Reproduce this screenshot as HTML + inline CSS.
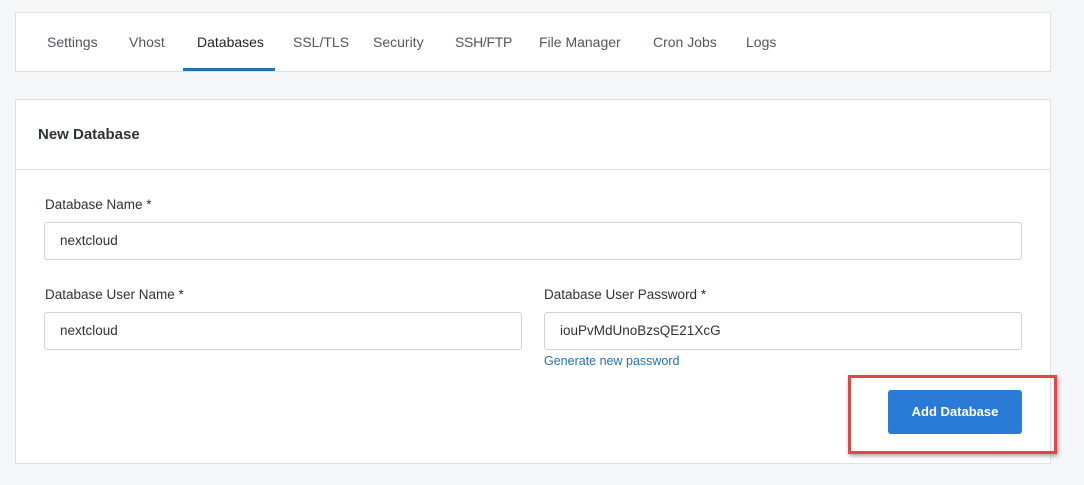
<!DOCTYPE html><html><head><style>
body{margin:0;background:#f5f6f8;font-family:"Liberation Sans",sans-serif;width:1084px;height:485px;position:relative;overflow:hidden;color:#2c3338}
.a{position:absolute}
.tabs{left:15px;top:12px;width:1034px;height:58px;background:#fff;border:1px solid #dcdfe3}
.tab{position:absolute;top:21px;font-size:14px;color:#50575e}
.card{left:15px;top:99px;width:1034px;height:363px;background:#fff;border:1px solid #dcdfe3}
.lbl{font-size:13.5px;color:#2c3338}
.inp{border:1px solid #cfd3d8;border-radius:3px;background:#fff;height:36px;box-sizing:border-box;font-size:13.5px;padding:10px 15px;color:#2c3338}
</style></head><body>
<div class="a tabs">
<span class="tab" style="left:31px">Settings</span>
<span class="tab" style="left:113px">Vhost</span>
<span class="tab" style="left:181px;color:#1d2327">Databases</span>
<span class="tab" style="left:277px">SSL/TLS</span>
<span class="tab" style="left:357px">Security</span>
<span class="tab" style="left:439px;letter-spacing:-0.3px">SSH/FTP</span>
<span class="tab" style="left:523px">File Manager</span>
<span class="tab" style="left:637px">Cron Jobs</span>
<span class="tab" style="left:730px">Logs</span>
<div class="a" style="left:167px;top:55px;width:92px;height:3px;background:#2271b1"></div>
</div>
<div class="a card">
<div class="a" style="left:22px;top:26px;font-size:15px;font-weight:bold;color:#2c3338">New Database</div>
<div class="a" style="left:0;top:69px;width:1034px;height:1px;background:#dcdfe3"></div>
</div>
<div class="a lbl" style="left:45px;top:197px">Database Name *</div>
<div class="a inp" style="left:44px;top:222px;width:978px;height:38px">nextcloud</div>
<div class="a lbl" style="left:45px;top:287px">Database User Name *</div>
<div class="a inp" style="left:44px;top:312px;width:478px;height:38px">nextcloud</div>
<div class="a lbl" style="left:544px;top:287px">Database User Password *</div>
<div class="a inp" style="left:544px;top:312px;width:478px;height:38px">iouPvMdUnoBzsQE21XcG</div>
<div class="a" style="left:544px;top:354px;font-size:12.5px;color:#2271b1">Generate new password</div>
<div class="a" style="left:888px;top:390px;width:134px;height:44px;background:#2a7ad8;border-radius:3px;color:#fff;font-size:13px;font-weight:bold;text-align:center;line-height:44px">Add Database</div>
<div class="a" style="left:848px;top:375px;width:203px;height:73px;border:3px solid #e04848;box-shadow:1px 2px 4px rgba(0,0,0,.35)"></div>
</body></html>
